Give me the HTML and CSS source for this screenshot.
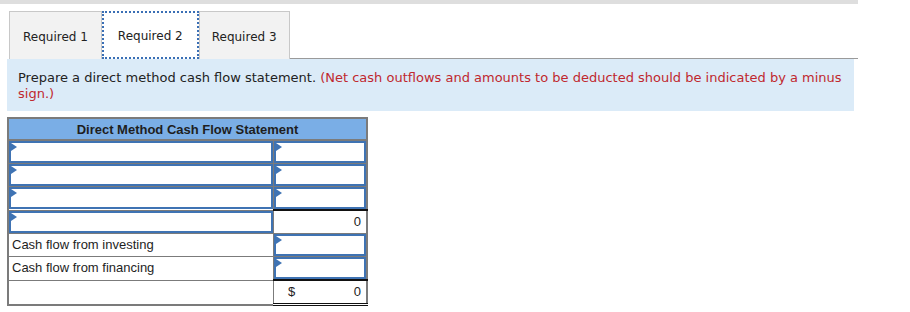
FILE: index.html
```html
<!DOCTYPE html>
<html lang="en">
<head>
    <meta charset="UTF-8">
    <title>Direct Method Cash Flow Statement</title>
    <link rel="stylesheet" href="styles.css">
</head>
<body>
    <div class="topbar"></div>

    <div class="tabs">
        <button class="tab">Required 1</button>
        <button class="tab active">Required 2</button>
        <button class="tab">Required 3</button>
    </div>

    <div class="prompt">
        Prepare a direct method cash flow statement. <span class="note">(Net cash outflows and amounts to be deducted should be indicated by a minus sign.)</span>
    </div>

    <table class="sheet">
        <tr>
            <th colspan="2">Direct Method Cash Flow Statement</th>
        </tr>
        <tr>
            <td class="label"><div class="entry"></div></td>
            <td class="amount"><div class="entry"></div></td>
        </tr>
        <tr>
            <td class="label"><div class="entry"></div></td>
            <td class="amount"><div class="entry"></div></td>
        </tr>
        <tr>
            <td class="label"><div class="entry"></div></td>
            <td class="amount"><div class="entry"></div></td>
        </tr>
        <tr>
            <td class="label"><div class="entry"></div></td>
            <td class="amount total"><div class="value">0</div></td>
        </tr>
        <tr>
            <td class="label"><div class="text">Cash flow from investing</div></td>
            <td class="amount"><div class="entry"></div></td>
        </tr>
        <tr>
            <td class="label"><div class="text">Cash flow from financing</div></td>
            <td class="amount"><div class="entry"></div></td>
        </tr>
        <tr>
            <td class="label"><div class="text"></div></td>
            <td class="amount total grand"><div class="value"><span>$</span><span>0</span></div></td>
        </tr>
    </table>
</body>
</html>
```

FILE: styles.css
```css
body {
    margin: 0;
    padding: 0;
    background: #ffffff;
    font-family: "DejaVu Sans", Verdana, sans-serif;
    color: #222;
}
.topbar {
    width: 858px;
    height: 4px;
    background-color: #dedede;
}
.tabs {
    display: flex;
    margin: 7px 0 0 9px;
    width: 849px;
    border-bottom: 1px solid #9a9a9a;
}
.tab {
    font-family: "DejaVu Sans", Verdana, sans-serif;
    font-size: 12px;
    color: #222;
    height: 48px;
    padding: 2px 13px 0;
    background-color: #f2f2f2;
    border: 1px solid #c8c8c8;
    border-bottom: none;
    margin-bottom: -1px;
    cursor: pointer;
}
.tab:last-child {
    padding: 2px 12px 0;
}
.tab.active {
    background-color: #ffffff;
    border: 2px dotted #3a6fb5;
    padding: 2px 14px 0;
    margin-bottom: -1px;
}
.prompt {
    margin-left: 7px;
    width: 836px;
    padding: 11px 0 9px 11px;
    background-color: #dbebf8;
    font-size: 13px;
    line-height: 16px;
    color: #222;
}
.note {
    color: #c0282e;
}
.sheet {
    margin: 6px 0 0 7px;
    border-collapse: collapse;
    font-family: "Liberation Sans", Arial, sans-serif;
    font-size: 13px;
    border: 2px solid #7b7b7b;
}
.sheet th {
    height: 20px;
    padding: 0;
    background-color: #7aaee6;
    color: #1e1e1e;
    font-size: 13px;
    font-weight: bold;
    text-align: center;
    border: 2px solid #7b7b7b;
}
.sheet td {
    height: 21px;
    padding: 0;
    border: 1px solid #7b7b7b;
}
.label {
    width: 264px;
}
.amount {
    width: 92px;
}
.entry {
    position: relative;
    height: 18px;
    border: 2px solid #3f73b3;
    background: #fff;
}
.entry::before {
    content: "";
    position: absolute;
    left: 0;
    top: 0;
    border-left: 6px solid #3f73b3;
    border-top: 4px solid transparent;
    border-bottom: 4px solid transparent;
}
.text {
    height: 22px;
    line-height: 22px;
    padding-left: 3px;
    color: #1e1e1e;
}
.value {
    height: 22px;
    line-height: 22px;
    padding: 0 5px 0 14px;
    text-align: right;
    display: flex;
    justify-content: flex-end;
}
.total {
    border-top: 2px solid #111 !important;
}
.grand {
    border-bottom: 3px double #111 !important;
}
.grand .value {
    justify-content: space-between;
}
```
